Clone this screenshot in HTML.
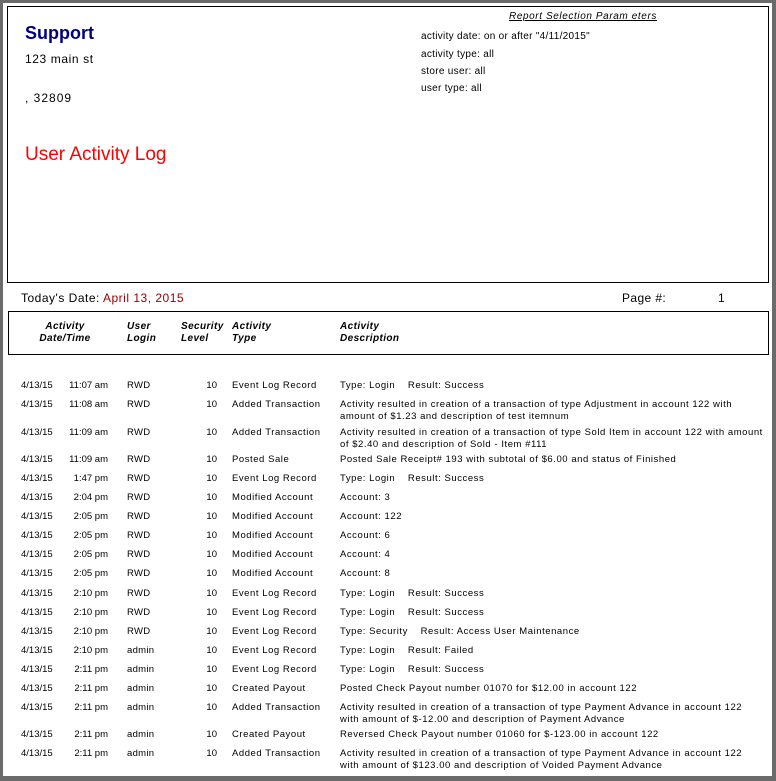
<!DOCTYPE html>
<html><head><meta charset="utf-8"><style>
*{margin:0;padding:0;box-sizing:border-box}
html,body{width:776px;height:781px;overflow:hidden;background:#6b6b6b}
#pg{position:absolute;left:3px;top:3px;width:769px;height:773px;background:#fff}
.a{position:absolute;white-space:nowrap;font-family:"Liberation Sans",Arial,sans-serif;color:#000}
.box{position:absolute;border:1.5px solid #000}
.r{font-size:9.5px;letter-spacing:0.3px;line-height:12px}
.d{letter-spacing:0.55px}
.n{letter-spacing:0}
.h{font-size:10px;font-weight:bold;font-style:italic;letter-spacing:0.4px;line-height:12px}
</style></head><body>
<div id="pg"></div>
<div class="box" style="left:7px;top:6px;width:762px;height:277px"></div>
<div class="a" style="left:25px;top:23px;font-size:18px;font-weight:bold;color:#000080">Support</div>
<div class="a" style="left:25px;top:52px;font-size:12px;letter-spacing:0.6px">123 main st</div>
<div class="a" style="left:25px;top:91px;font-size:12px;letter-spacing:1px">, 32809</div>
<div class="a" style="left:25px;top:144px;font-size:19px;color:#ff0000">User Activity Log</div>
<div class="a" style="left:509px;top:11px;font-size:10px;font-style:italic;text-decoration:underline;letter-spacing:0.6px">Report Selection Param eters</div>
<div class="a r" style="left:421px;top:31px;font-size:10px">activity date: on or after "4/11/2015"</div>
<div class="a r" style="left:421px;top:49px;font-size:10px">activity type: all</div>
<div class="a r" style="left:421px;top:66px;font-size:10px">store user: all</div>
<div class="a r" style="left:421px;top:83px;font-size:10px">user type: all</div>
<div class="a" style="left:21px;top:291px;font-size:12px;letter-spacing:0.5px;color:#000">Today's Date: <span style="color:#a00000">April 13, 2015</span></div>
<div class="a" style="left:622px;top:291px;font-size:12px;letter-spacing:0.4px">Page #:</div>
<div class="a" style="left:718px;top:291px;font-size:12px">1</div>
<div class="box" style="left:8px;top:311px;width:761px;height:44px"></div>
<div class="a h" style="left:31px;top:321px;width:68px;text-align:center">Activity<br>Date/Time</div>
<div class="a h" style="left:127px;top:321px">User<br>Login</div>
<div class="a h" style="left:181px;top:321px">Security<br>Level</div>
<div class="a h" style="left:232px;top:321px">Activity<br>Type</div>
<div class="a h" style="left:340px;top:321px">Activity<br>Description</div>
<div id="rows"></div>
<script>
var R=[
[380,"4/13/15","11:07 am","RWD","Event Log Record","Type: Login &nbsp;&nbsp; Result: Success"],
[399,"4/13/15","11:08 am","RWD","Added Transaction","Activity resulted in creation of a transaction of type Adjustment in account 122 with<br>amount of $1.23 and description of test itemnum"],
[427,"4/13/15","11:09 am","RWD","Added Transaction","Activity resulted in creation of a transaction of type Sold Item in account 122 with amount<br>of $2.40 and description of Sold - Item #111"],
[454,"4/13/15","11:09 am","RWD","Posted Sale","Posted Sale Receipt# 193 with subtotal of $6.00 and status of Finished"],
[473,"4/13/15","1:47 pm","RWD","Event Log Record","Type: Login &nbsp;&nbsp; Result: Success"],
[492,"4/13/15","2:04 pm","RWD","Modified Account","Account: 3"],
[511,"4/13/15","2:05 pm","RWD","Modified Account","Account: 122"],
[530,"4/13/15","2:05 pm","RWD","Modified Account","Account: 6"],
[549,"4/13/15","2:05 pm","RWD","Modified Account","Account: 4"],
[568,"4/13/15","2:05 pm","RWD","Modified Account","Account: 8"],
[588,"4/13/15","2:10 pm","RWD","Event Log Record","Type: Login &nbsp;&nbsp; Result: Success"],
[607,"4/13/15","2:10 pm","RWD","Event Log Record","Type: Login &nbsp;&nbsp; Result: Success"],
[626,"4/13/15","2:10 pm","RWD","Event Log Record","Type: Security &nbsp;&nbsp; Result: Access User Maintenance"],
[645,"4/13/15","2:10 pm","admin","Event Log Record","Type: Login &nbsp;&nbsp; Result: Failed"],
[664,"4/13/15","2:11 pm","admin","Event Log Record","Type: Login &nbsp;&nbsp; Result: Success"],
[683,"4/13/15","2:11 pm","admin","Created Payout","Posted Check Payout number 01070 for $12.00 in account 122"],
[702,"4/13/15","2:11 pm","admin","Added Transaction","Activity resulted in creation of a transaction of type Payment Advance in account 122<br>with amount of $-12.00 and description of Payment Advance"],
[729,"4/13/15","2:11 pm","admin","Created Payout","Reversed Check Payout number 01060 for $-123.00 in account 122"],
[748,"4/13/15","2:11 pm","admin","Added Transaction","Activity resulted in creation of a transaction of type Payment Advance in account 122<br>with amount of $123.00 and description of Voided Payment Advance"]];
var h="";
R.forEach(function(r){var t=r[0];
h+='<div class="a r n" style="left:21px;top:'+t+'px">'+r[1]+'</div>';
h+='<div class="a r n" style="left:48px;width:60px;text-align:right;top:'+t+'px">'+r[2]+'</div>';
h+='<div class="a r" style="left:127px;top:'+t+'px">'+r[3]+'</div>';
h+='<div class="a r n" style="left:190px;width:27px;text-align:right;top:'+t+'px">10</div>';
h+='<div class="a r d" style="left:232px;top:'+t+'px">'+r[4]+'</div>';
h+='<div class="a r d" style="left:340px;top:'+t+'px">'+r[5]+'</div>';});
document.getElementById("rows").innerHTML=h;
</script>
</body></html>
